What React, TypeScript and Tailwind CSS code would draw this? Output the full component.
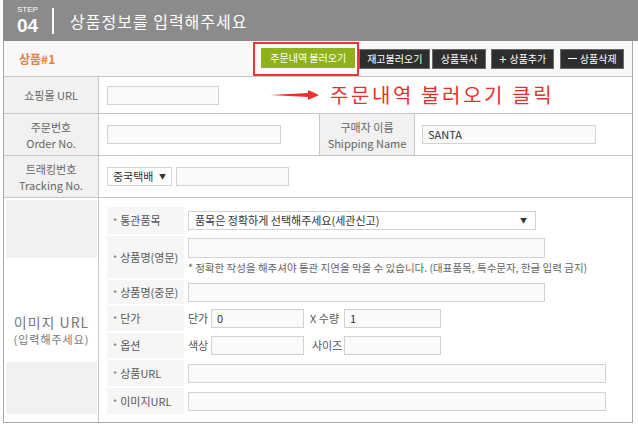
import React from 'react';

const FONT = { fontFamily: '"Noto Sans CJK KR", "Noto Sans", sans-serif' };

const Field = ({ w, value = '' }: { w: string; value?: string }) => (
  <div className={`${w} h-[19px] border border-[#d2d2d2] bg-[#fafafa] px-[5px] text-[11px] leading-[17px] text-[#333]`}>
    {value}
  </div>
);

const Label = ({ ko, en }: { ko: string; en?: string }) => (
  <div className="w-[95px] shrink-0 bg-[#f1f1f1] border-r border-[#c6c6c6] flex flex-col items-center justify-center text-[11px] leading-[16px] text-[#666]">
    <span>{ko}</span>
    {en && <span>{en}</span>}
  </div>
);

const SubRow = ({ label, h, children }: { label: string; h: string; children: React.ReactNode }) => (
  <div className={`flex ${h}`}>
    <div className="w-[77px] shrink-0 bg-[#f6f6f6] flex items-center pl-[6px] text-[11px] text-[#555]">
      <span className="relative top-[1px] text-[9px] leading-none mr-[3px] text-[#777]">*</span>
      {label}
    </div>
    <div className="flex-1 pl-[4px] flex flex-col justify-center">{children}</div>
  </div>
);

const DarkButton = ({ children, cls }: { children: React.ReactNode; cls: string }) => (
  <div className={`${cls} h-[20px] bg-[#2e2e2e] border border-[#6b6b6b] text-white text-[10px] flex items-center justify-center`}>
    {children}
  </div>
);

export default function App() {
  return (
    <div className="w-[638px] h-[426px] bg-white pl-[3px] overflow-hidden" style={FONT}>
      {/* step header */}
      <div className="w-[635px] h-[41px] bg-[#8b8b8b] flex items-center text-white">
        <div className="w-[49px] pl-[14px] flex flex-col font-['Liberation_Sans',Arial,sans-serif]">
          <span className="text-[8px] leading-[10px]">STEP</span>
          <span className="text-[19px] font-bold leading-[22px]">04</span>
        </div>
        <div className="w-[2px] h-[26px] bg-white" />
        <div className="pl-[16px] text-[16px] tracking-[1px]">상품정보를 입력해주세요</div>
      </div>

      <div className="w-[630px] border-l border-r border-b border-[#a9a9a9]">
        {/* product bar */}
        <div className="h-[36px] bg-[#f8f8f8] border-b border-[#c6c6c6] flex items-center pl-[15px]">
          <span className="text-[12px] font-bold text-[#e2813f]">상품#1</span>
          <div className="ml-[198px] flex items-center">
            <div className="border-2 border-[#e23a35] pl-[6px] pr-[2px] pt-[4px] pb-[6px]">
              <div className="w-[94px] h-[20px] bg-[#8fb21a] text-white text-[10px] flex items-center justify-center">
                주문내역 불러오기
              </div>
            </div>
            <DarkButton cls="w-[71px]">재고불러오기</DarkButton>
            <DarkButton cls="w-[54px] ml-[2px]">상품복사</DarkButton>
            <DarkButton cls="w-[63px] ml-[5px]">
              <span className="text-[13px] leading-none mr-[3px]">+</span>상품추가
            </DarkButton>
            <DarkButton cls="w-[64px] ml-[6px]">
              <span className="inline-block w-[9px] h-[1.5px] bg-white mr-[3px]" />상품삭제
            </DarkButton>
          </div>
        </div>

        {/* shopping mall url */}
        <div className="h-[37px] flex border-b border-[#c6c6c6]">
          <Label ko="쇼핑몰 URL" />
          <div className="flex items-center pl-[8px]">
            <Field w="w-[112px]" />
            <svg width="50" height="12" viewBox="0 0 50 12" className="ml-[51px]">
              <polygon points="0,6 38,4 38,1 49,6 38,11 38,8" fill="#e8302c" />
            </svg>
            <span className="ml-[10px] text-[20px] text-[#e5312d] tracking-[2.6px] whitespace-nowrap">주문내역 불러오기 클릭</span>
          </div>
        </div>

        {/* order no */}
        <div className="h-[42px] flex border-b border-[#c6c6c6]">
          <Label ko="주문번호" en="Order No." />
          <div className="w-[220px] flex items-center pl-[8px]">
            <Field w="w-[174px]" />
          </div>
          <div className="w-[96px] shrink-0 bg-[#f1f1f1] border-l border-r border-[#c6c6c6] flex flex-col items-center justify-center text-[11px] leading-[16px] text-[#666]">
            <span>구매자 이름</span>
            <span>Shipping Name</span>
          </div>
          <div className="flex items-center pl-[7px]">
            <Field w="w-[174px]" value="SANTA" />
          </div>
        </div>

        {/* tracking */}
        <div className="h-[42px] flex border-b border-[#c6c6c6]">
          <Label ko="트래킹번호" en="Tracking No." />
          <div className="flex items-center pl-[8px] gap-[4px]">
            <div className="w-[65px] h-[19px] border border-[#d2d2d2] bg-white flex items-center justify-between px-[5px] text-[11px] text-[#333]">
              <span>중국택배</span>
              <span className="text-[7px]">▼</span>
            </div>
            <Field w="w-[113px]" />
          </div>
        </div>

        {/* product details */}
        <div className="h-[224px] flex">
          <div className="w-[95px] shrink-0 border-r border-[#c6c6c6] pt-[2px] pl-[2px] pr-[1px] pb-[8px] flex flex-col">
            <div className="h-[58px] bg-[#f1f1f1]" />
            <div className="flex-1 flex flex-col items-center justify-center pt-[40px] text-[#777]">
              <span className="text-[14px] leading-[18px] tracking-[1px]">이미지 URL</span>
              <span className="text-[11px] leading-[16px] tracking-[1px]">(입력해주세요)</span>
            </div>
            <div className="h-[52px] bg-[#f1f1f1]" />
          </div>

          <div className="flex-1 pl-[8px] pt-[9px] flex flex-col gap-[2px]">
            <SubRow label="통관품목" h="h-[27px]">
              <div className="w-[348px] h-[19px] border border-[#d2d2d2] bg-white flex items-center justify-between px-[6px] text-[11px] text-[#333]">
                <span>품목은 정확하게 선택해주세요(세관신고)</span>
                <span className="text-[7px] mr-[2px]">▼</span>
              </div>
            </SubRow>
            <SubRow label="상품명(영문)" h="h-[42px]">
              <div className="w-[357px] h-[20px] border border-[#d2d2d2] bg-[#fafafa]" />
              <span className="mt-[2px] text-[10.5px] whitespace-nowrap text-[#666]">* 정확한 작성을 해주셔야 통관 지연을 막을 수 있습니다. (대표품목, 특수문자, 한글 입력 금지)</span>
            </SubRow>
            <SubRow label="상품명(중문)" h="h-[24px]">
              <Field w="w-[357px]" />
            </SubRow>
            <SubRow label="단가" h="h-[25px]">
              <div className="flex items-center text-[11px] text-[#555] whitespace-nowrap">
                <span className="w-[23px]">단가</span>
                <Field w="w-[93px]" value="0" />
                <span className="ml-[6px] w-[34px]">X 수량</span>
                <Field w="w-[97px]" value="1" />
              </div>
            </SubRow>
            <SubRow label="옵션" h="h-[25px]">
              <div className="flex items-center text-[11px] text-[#555] whitespace-nowrap">
                <span className="w-[23px]">색상</span>
                <Field w="w-[93px]" />
                <span className="ml-[8px] mr-[2px]">사이즈</span>
                <Field w="w-[97px]" />
              </div>
            </SubRow>
            <SubRow label="상품URL" h="h-[26px]">
              <Field w="w-[418px]" />
            </SubRow>
            <SubRow label="이미지URL" h="h-[26px]">
              <Field w="w-[418px]" />
            </SubRow>
          </div>
        </div>
      </div>
    </div>
  );
}
